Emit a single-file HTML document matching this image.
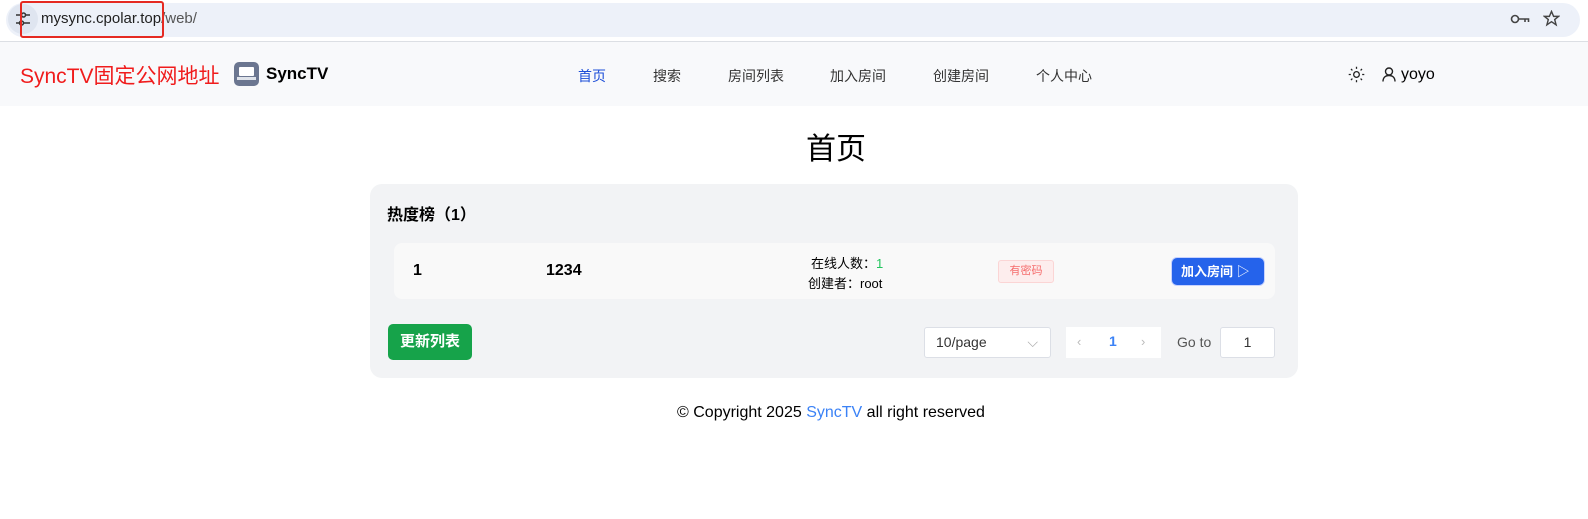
<!DOCTYPE html>
<html><head><meta charset="utf-8"><style>
*{margin:0;padding:0;box-sizing:border-box}
body{width:1588px;height:519px;background:#fff;font-family:"Liberation Sans","Noto Sans CJK SC",sans-serif;position:relative;overflow:hidden;color:#000}
.abs{position:absolute}
.bar{left:0;top:0;width:1588px;height:42px;background:#fff;border-bottom:1px solid #dcdfe4}
.pill{left:6px;top:3px;width:1574px;height:34px;border-radius:17px;background:#edf1f9}
.hdr{left:0;top:42px;width:1588px;height:64px;background:#f8f9fb}
.nav{font-size:14px;color:#333;top:66px}
.card{left:370px;top:184px;width:928px;height:194px;background:#f2f3f5;border-radius:12px}
.row{left:394px;top:243px;width:881px;height:56px;background:#f9f9f9;border-radius:8px}
</style></head><body>
<div class="abs bar"></div>
<div class="abs pill"></div>
<div class="abs" style="left:8px;top:4px;width:30px;height:30px;border-radius:15px;background:#dfe5f0"></div>
<svg class="abs" style="left:15px;top:11px" width="16" height="16" viewBox="0 0 16 16" fill="none" stroke="#333" stroke-width="1.5"><path d="M1 4h6M10 4h5M9 12h6M1 12h4"/><circle cx="8.5" cy="4" r="2"/><circle cx="6.5" cy="12" r="2"/></svg>
<div class="abs" style="left:41px;top:10px;font-size:15px;color:#1f1f1f">mysync.cpolar.top<span style="color:#555">/web/</span></div>
<div class="abs" style="left:20px;top:1px;width:144px;height:37px;border:2px solid #e52a22;border-radius:3px"></div>
<svg class="abs" style="left:1510px;top:12px" width="20" height="14" viewBox="0 0 20 14" fill="none" stroke="#444" stroke-width="1.6"><circle cx="5" cy="7" r="3.5"/><path d="M8.5 7h10v3M15 7v3"/></svg>
<svg class="abs" style="left:1543px;top:10px" width="17" height="17" viewBox="0 0 24 24" fill="none" stroke="#444" stroke-width="2"><path d="M12 2l3 7h7l-5.5 4.5 2 7.5-6.5-4.5-6.5 4.5 2-7.5L2 9h7z"/></svg>
<div class="abs hdr"></div>
<div class="abs" style="left:20px;top:60px;font-size:21px;color:#f01c1c">SyncTV固定公网地址</div>
<div class="abs" style="left:234px;top:62px;width:25px;height:24px;border-radius:5px;background:#6b7690"></div>
<div class="abs" style="left:239px;top:67px;width:15px;height:9px;background:#fff;border-radius:1px"></div>
<div class="abs" style="left:237px;top:77px;width:19px;height:3px;background:#dfe3ea"></div>
<div class="abs" style="left:266px;top:64px;font-size:17px;font-weight:bold">SyncTV</div>
<div class="abs nav" style="left:578px;color:#1d4ed8">首页</div>
<div class="abs nav" style="left:653px">搜索</div>
<div class="abs nav" style="left:728px">房间列表</div>
<div class="abs nav" style="left:830px">加入房间</div>
<div class="abs nav" style="left:933px">创建房间</div>
<div class="abs nav" style="left:1036px">个人中心</div>
<svg class="abs" style="left:1348px;top:66px" width="17" height="17" viewBox="0 0 24 24" fill="none" stroke="#222" stroke-width="1.8"><circle cx="12" cy="12" r="4"/><path d="M12 1v3M12 20v3M1 12h3M20 12h3M4.2 4.2l2 2M17.8 17.8l2 2M4.2 19.8l2-2M17.8 6.2l2-2"/></svg>
<svg class="abs" style="left:1382px;top:67px" width="14" height="15" viewBox="0 0 14 15" fill="none" stroke="#222" stroke-width="1.4"><circle cx="7" cy="4.5" r="3.5"/><path d="M1 14.5c0-4 2.5-6 6-6s6 2 6 6"/></svg>
<div class="abs" style="left:1401px;top:66px;font-size:16px">yoyo</div>
<div class="abs" style="left:806px;top:124px;font-size:30px">首页</div>
<div class="abs card"></div>
<div class="abs" style="left:387px;top:201px;font-size:16px;font-weight:bold">热度榜（1）</div>
<div class="abs row"></div>
<div class="abs" style="left:413px;top:262px;font-size:16px;font-weight:bold">1</div>
<div class="abs" style="left:546px;top:262px;font-size:16px;font-weight:bold">1234</div>
<div class="abs" style="left:811px;top:253px;font-size:13px">在线人数：<span style="color:#22c55e">1</span></div>
<div class="abs" style="left:808px;top:273px;font-size:13px">创建者：root</div>
<div class="abs" style="left:998px;top:260px;width:56px;height:23px;background:#fdeded;border:1px solid #fbd5d5;border-radius:3px;color:#f56c6c;font-size:11px;text-align:center;line-height:21px">有密码</div>
<div class="abs" style="left:1171px;top:257px;width:94px;height:29px;background:#2563eb;border-radius:6px;border:1px solid #c7d2fe;color:#fff;font-size:13px;font-weight:bold;line-height:27px;padding-left:9px">加入房间 <span style="font-weight:normal">▷</span></div>
<div class="abs" style="left:388px;top:324px;width:84px;height:36px;background:#16a34a;border-radius:5px;color:#fff;font-size:15px;font-weight:bold;text-align:center;line-height:36px">更新列表</div>
<div class="abs" style="left:924px;top:327px;width:127px;height:31px;background:#fff;border:1px solid #dcdfe6;border-radius:3px;font-size:14px;color:#333;line-height:29px;padding-left:11px">10/page<span style="position:absolute;right:12px;color:#aaa">⌵</span></div>
<div class="abs" style="left:1066px;top:327px;width:95px;height:31px;background:#fff"></div>
<div class="abs" style="left:1077px;top:334px;font-size:13px;color:#bbb">‹</div>
<div class="abs" style="left:1109px;top:333px;font-size:14px;font-weight:bold;color:#3b82f6">1</div>
<div class="abs" style="left:1141px;top:334px;font-size:13px;color:#bbb">›</div>
<div class="abs" style="left:1177px;top:334px;font-size:14px;color:#555">Go to</div>
<div class="abs" style="left:1220px;top:327px;width:55px;height:31px;background:#fff;border:1px solid #dcdfe6;border-radius:3px;font-size:14px;text-align:center;line-height:29px;color:#333">1</div>
<div class="abs" style="left:677px;top:404px;font-size:16px">© Copyright 2025 <span style="color:#3b82f6">SyncTV</span> all right reserved</div>
</body></html>
